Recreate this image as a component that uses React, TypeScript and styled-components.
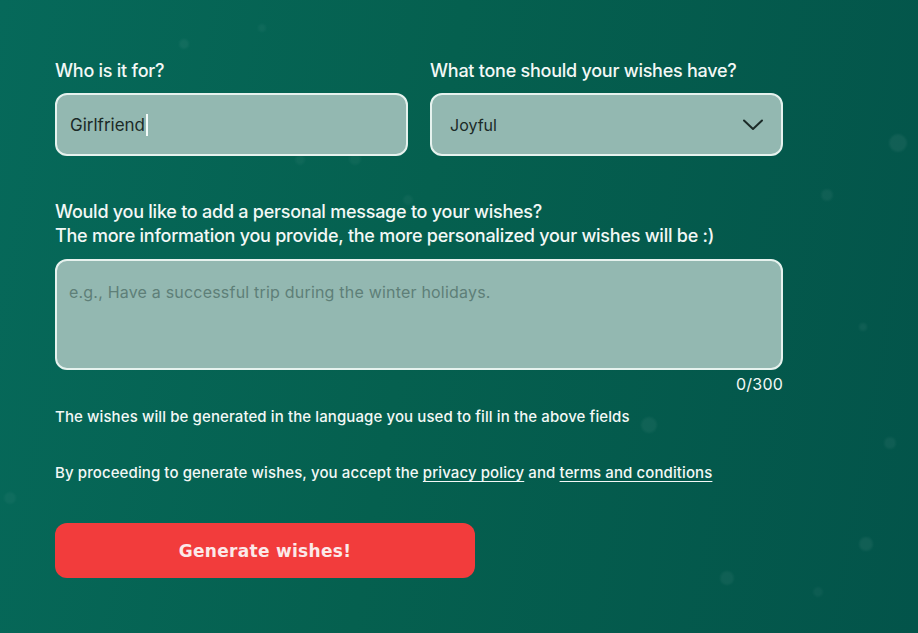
import React from "react";
import styled, { createGlobalStyle } from "styled-components";

const Global = createGlobalStyle`
  html, body { margin: 0; padding: 0; }
  body {
    font-family: Inter, "Liberation Sans", Arial, sans-serif;
    background: linear-gradient(100deg, #06695a 0%, #05604f 45%, #03544a 100%);
    min-height: 100vh;
  }
  * { box-sizing: border-box; }
`;

const Page = styled.div`
  position: relative;
  min-height: 633px;
  overflow: hidden;
  padding: 59px 0 0 55px;
`;

const Form = styled.form`
  position: relative;
  z-index: 1;
  width: 728px;
  display: flex;
  flex-direction: column;
`;

const Row = styled.div`
  display: grid;
  grid-template-columns: 1fr 1fr;
  gap: 22px;
`;

const Field = styled.div`
  display: flex;
  flex-direction: column;
  gap: 10px;
`;

const Label = styled.label`
  color: #f3f8f6;
  font-size: 18px;
  font-weight: 500;
  line-height: 24px;
  letter-spacing: -0.25px;
`;

const boxStyles = `
  width: 100%;
  background: #93b8b1;
  border: 2px solid #e6f2ee;
  border-radius: 12px;
  font-family: Inter, "Liberation Sans", Arial, sans-serif;
  font-size: 16px;
  color: #1b2a27;
  outline: none;
`;

const SelectBox = styled.div<{ $pad: number }>`
  ${boxStyles}
  height: 63px;
  padding: 0 17px 0 ${(p) => p.$pad}px;
  display: flex;
  align-items: center;
  justify-content: space-between;
`;

const Caret = styled.span`
  display: inline-block;
  width: 2px;
  height: 22px;
  background: #f5fbf9;
  margin-left: 1px;
`;

const FakeInputText = styled.span`
  display: flex;
  align-items: center;
  font-size: 17px;
`;

const Section = styled.div`
  margin-top: 44px;
  display: flex;
  flex-direction: column;
  gap: 11px;
`;

const TextArea = styled.textarea`
  ${boxStyles}
  height: 111px;
  padding: 21px 12px;
  resize: none;
  line-height: 20px;
  letter-spacing: 0.2px;
  &::placeholder { color: #5e7f78; opacity: 1; }
`;

const Counter = styled.div`
  margin-top: 6px;
  text-align: right;
  color: #f3f8f6;
  font-size: 16px;
  line-height: 16px;
  letter-spacing: 0.2px;
`;

const Note = styled.p<{ $gap: number }>`
  margin: ${(p) => p.$gap}px 0 0;
  color: #f3f8f6;
  font-size: 15px;
  font-weight: 500;
  line-height: 20px;
  letter-spacing: 0.1px;
`;

const Link = styled.a`
  color: #f3f8f6;
  text-decoration: underline;
  text-underline-offset: 3px;
`;

const Button = styled.button`
  margin-top: 40px;
  width: 420px;
  height: 55px;
  border: none;
  border-radius: 12px;
  background: #f23c3c;
  color: #fbe9e9;
  font-family: "DejaVu Sans", Verdana, sans-serif;
  font-weight: 700;
  font-size: 17px;
  letter-spacing: 0.3px;
  cursor: pointer;
`;

const Dot = styled.span<{ $x: number; $y: number; $r: number; $o: number }>`
  position: absolute;
  left: ${(p) => p.$x - p.$r}px;
  top: ${(p) => p.$y - p.$r}px;
  width: ${(p) => p.$r * 2}px;
  height: ${(p) => p.$r * 2}px;
  border-radius: 50%;
  background: rgba(255, 255, 255, ${(p) => p.$o});
  filter: blur(1px);
`;

const dots = [
  { x: 898, y: 143, r: 9, o: 0.06 },
  { x: 827, y: 195, r: 6, o: 0.05 },
  { x: 863, y: 327, r: 4, o: 0.05 },
  { x: 890, y: 443, r: 6, o: 0.05 },
  { x: 866, y: 544, r: 7, o: 0.06 },
  { x: 818, y: 592, r: 5, o: 0.04 },
  { x: 649, y: 425, r: 8, o: 0.05 },
  { x: 408, y: 200, r: 5, o: 0.04 },
  { x: 184, y: 44, r: 5, o: 0.05 },
  { x: 262, y: 28, r: 4, o: 0.04 },
  { x: 727, y: 578, r: 7, o: 0.05 },
  { x: 10, y: 498, r: 6, o: 0.04 },
  { x: 300, y: 160, r: 5, o: 0.04 },
  { x: 355, y: 159, r: 6, o: 0.04 },
];

function Chevron() {
  return (
    <svg width="22" height="14" viewBox="0 0 22 14" fill="none">
      <path d="M2 2.5 L11 11 L20 2.5" stroke="#1b2a27" strokeWidth="2" strokeLinecap="round" strokeLinejoin="round" />
    </svg>
  );
}

export default function App() {
  return (
    <>
      <Global />
      <Page>
        {dots.map((d, i) => (
          <Dot key={i} $x={d.x} $y={d.y} $r={d.r} $o={d.o} />
        ))}
        <Form onSubmit={(e) => e.preventDefault()}>
          <Row>
            <Field>
              <Label>Who is it for?</Label>
              <SelectBox $pad={13}>
                <FakeInputText>
                  Girlfriend
                  <Caret />
                </FakeInputText>
              </SelectBox>
            </Field>
            <Field>
              <Label>What tone should your wishes have?</Label>
              <SelectBox $pad={18}>
                <span>Joyful</span>
                <Chevron />
              </SelectBox>
            </Field>
          </Row>
          <Section>
            <Label>
              Would you like to add a personal message to your wishes?
              <br />
              The more information you provide, the more personalized your wishes will be :)
            </Label>
            <TextArea placeholder="e.g., Have a successful trip during the winter holidays." />
          </Section>
          <Counter>0/300</Counter>
          <Note $gap={15}>The wishes will be generated in the language you used to fill in the above fields</Note>
          <Note $gap={36}>
            By proceeding to generate wishes, you accept the <Link href="#">privacy policy</Link> and{" "}
            <Link href="#">terms and conditions</Link>
          </Note>
          <Button type="submit">Generate wishes!</Button>
        </Form>
      </Page>
    </>
  );
}
